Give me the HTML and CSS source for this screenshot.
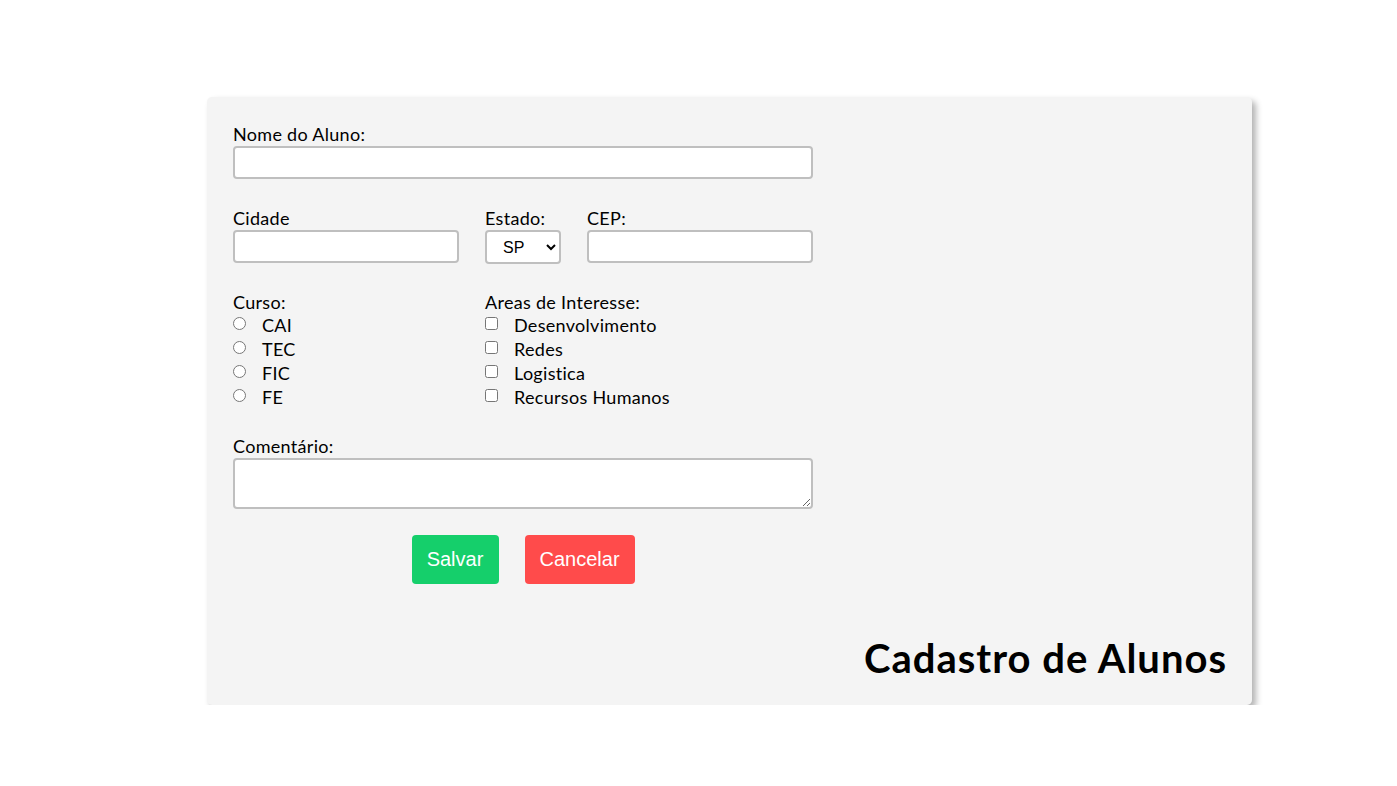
FILE: index.html
```html
<!DOCTYPE html>
<html lang="pt-BR">
<head>
<meta charset="utf-8">
<title>Cadastro de Alunos</title>
<link rel="stylesheet" href="styles.css">
</head>
<body>
<div class="card">
  <form class="form">
    <div class="field">
      <label class="lbl" for="nome">Nome do Aluno:</label>
      <input class="inp full" id="nome" type="text">
    </div>
    <div class="row">
      <div class="field">
        <label class="lbl" for="cidade">Cidade</label>
        <input class="inp w225" id="cidade" type="text">
      </div>
      <div class="field">
        <label class="lbl" for="estado">Estado:</label>
        <select class="sel" id="estado"><option>SP</option></select>
      </div>
      <div class="field">
        <label class="lbl" for="cep">CEP:</label>
        <input class="inp w225" id="cep" type="text">
      </div>
    </div>
    <div class="row options">
      <div class="group col1">
        <div class="lbl">Curso:</div>
        <label class="opt"><input type="radio" name="curso"><span>CAI</span></label>
        <label class="opt"><input type="radio" name="curso"><span>TEC</span></label>
        <label class="opt"><input type="radio" name="curso"><span>FIC</span></label>
        <label class="opt"><input type="radio" name="curso"><span>FE</span></label>
      </div>
      <div class="group">
        <div class="lbl">Areas de Interesse:</div>
        <label class="opt"><input type="checkbox"><span>Desenvolvimento</span></label>
        <label class="opt"><input type="checkbox"><span>Redes</span></label>
        <label class="opt"><input type="checkbox"><span>Logistica</span></label>
        <label class="opt"><input type="checkbox"><span>Recursos Humanos</span></label>
      </div>
    </div>
    <div class="field comment">
      <label class="lbl" for="coment">Comentário:</label>
      <textarea class="inp full area" id="coment"></textarea>
    </div>
    <div class="buttons">
      <button type="button" class="btn save">Salvar</button>
      <button type="button" class="btn cancel">Cancelar</button>
    </div>
  </form>
  <h1 class="title">Cadastro de Alunos</h1>
</div>
</body>
</html>
```
FILE: styles.css
```css
* { box-sizing: border-box; }
html, body { margin: 0; padding: 0; background: #fff; }
body {
  font-family: "Lato", "Noto Sans", sans-serif;
  font-size: 18px;
  color: #000;
  padding-top: 97px;
}
.card {
  width: 1045px;
  height: 608px;
  margin-left: 207px;
  background: #f4f4f4;
  border-radius: 5px;
  box-shadow: 4px 4px 6px rgba(0,0,0,0.3);
  padding: 26px 25px 0 26px;
  display: flex;
  flex-direction: column;
}
.form { width: 580px; display: flex; flex-direction: column; }
.field { display: flex; flex-direction: column; }
.lbl { line-height: 22px; height: 22px; display: block; letter-spacing: 0.3px; }
.inp {
  border: 2px solid #bfbfbf;
  border-radius: 4px;
  background: #fff;
  height: 33px;
  margin-top: 1px;
  font: inherit;
  outline: none;
}
.full { width: 580px; }
.w225 { width: 226px; }
.row { display: flex; gap: 26px; margin-top: 28px; }
.sel {
  width: 76px;
  height: 34px;
  margin-top: 1px;
  border: 2px solid #bfbfbf;
  border-radius: 4px;
  background: #fff;
  font-family: "Liberation Sans", Arial, sans-serif;
  font-size: 16px;
  padding: 0 0 0 12px;
  color: #000;
}
.options { margin-top: 27px; gap: 0; }
.col1 { width: 252px; }
.group { display: flex; flex-direction: column; }
.opt { display: flex; align-items: center; height: 24px; line-height: 24px; letter-spacing: 0.3px; }
.opt input { margin: 0 16px 0 0; width: 13px; height: 13px; position: relative; top: -2px; }
.comment { margin-top: 26px; }
.area { height: 51px; resize: vertical; }
.buttons { display: flex; justify-content: center; gap: 26px; margin-top: 26px; }
.btn {
  border: none;
  border-radius: 4px;
  color: #fff;
  font-family: "Liberation Sans", Arial, sans-serif;
  font-size: 20px;
  height: 49px;
  padding: 0 15px;
}
.save { background: #15cf6b; width: 87px; }
.cancel { background: #ff4b4b; width: 110px; }
.title {
  margin: auto 0 0 0;
  padding-bottom: 24px;
  text-align: right;
  font-size: 40px;
  font-weight: 700;
  letter-spacing: 1px;
  line-height: 46px;
}
```
